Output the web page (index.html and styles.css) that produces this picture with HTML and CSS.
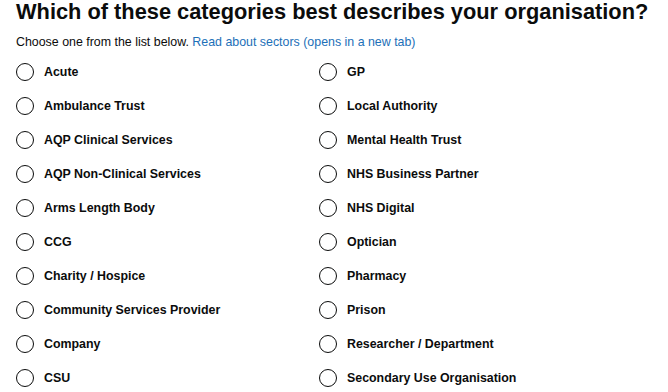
FILE: index.html
```html
<!DOCTYPE html>
<html>

<head>
    <link rel="stylesheet" href="styles.css">
</head>

<body>
    <main class="page">
        <h1 class="question">Which of these categories best describes your organisation?</h1>
        <p class="hint">Choose one from the list below. <a href="#" class="hint-link">Read about sectors (opens in a new tab)</a></p>

        <div class="choices">
            <!-- left column -->
            <label class="choice"><span class="radio"></span>Acute</label>
            <label class="choice"><span class="radio"></span>GP</label>
            <label class="choice"><span class="radio"></span>Ambulance Trust</label>
            <label class="choice"><span class="radio"></span>Local Authority</label>
            <label class="choice"><span class="radio"></span>AQP Clinical Services</label>
            <label class="choice"><span class="radio"></span>Mental Health Trust</label>
            <label class="choice"><span class="radio"></span>AQP Non-Clinical Services</label>
            <label class="choice"><span class="radio"></span>NHS Business Partner</label>
            <label class="choice"><span class="radio"></span>Arms Length Body</label>
            <label class="choice"><span class="radio"></span>NHS Digital</label>
            <label class="choice"><span class="radio"></span>CCG</label>
            <label class="choice"><span class="radio"></span>Optician</label>
            <label class="choice"><span class="radio"></span>Charity / Hospice</label>
            <label class="choice"><span class="radio"></span>Pharmacy</label>
            <label class="choice"><span class="radio"></span>Community Services Provider</label>
            <label class="choice"><span class="radio"></span>Prison</label>
            <label class="choice"><span class="radio"></span>Company</label>
            <label class="choice"><span class="radio"></span>Researcher / Department</label>
            <label class="choice"><span class="radio"></span>CSU</label>
            <label class="choice"><span class="radio"></span>Secondary Use Organisation</label>
        </div>
    </main>
</body>

</html>
```

FILE: styles.css
```css
/* question page */

body {
    margin: 0;
    background: #fff;
    color: #0b0c0c;
    font-family: "Liberation Sans", Arial, sans-serif;
}

.page {
    padding: 0 16px;
}

.question {
    margin: 0;
    font-size: 21.8px;
    line-height: 24px;
    font-weight: bold;
    white-space: nowrap;
}

.hint {
    margin: 10px 0 0;
    font-size: 12.4px;
    line-height: 16px;
}

.hint-link {
    color: #1d70b8;
    text-decoration: none;
}

/* two columns of radios */

.choices {
    display: grid;
    grid-template-columns: 303px 1fr;
    margin-top: 5px;
}

.choice {
    display: flex;
    align-items: center;
    height: 34px;
    font-size: 12.4px;
    font-weight: bold;
}

.radio {
    width: 18px;
    height: 18px;
    box-sizing: border-box;
    border: 1.7px solid #0b0c0c;
    border-radius: 50%;
    margin-right: 10px;
}
```
